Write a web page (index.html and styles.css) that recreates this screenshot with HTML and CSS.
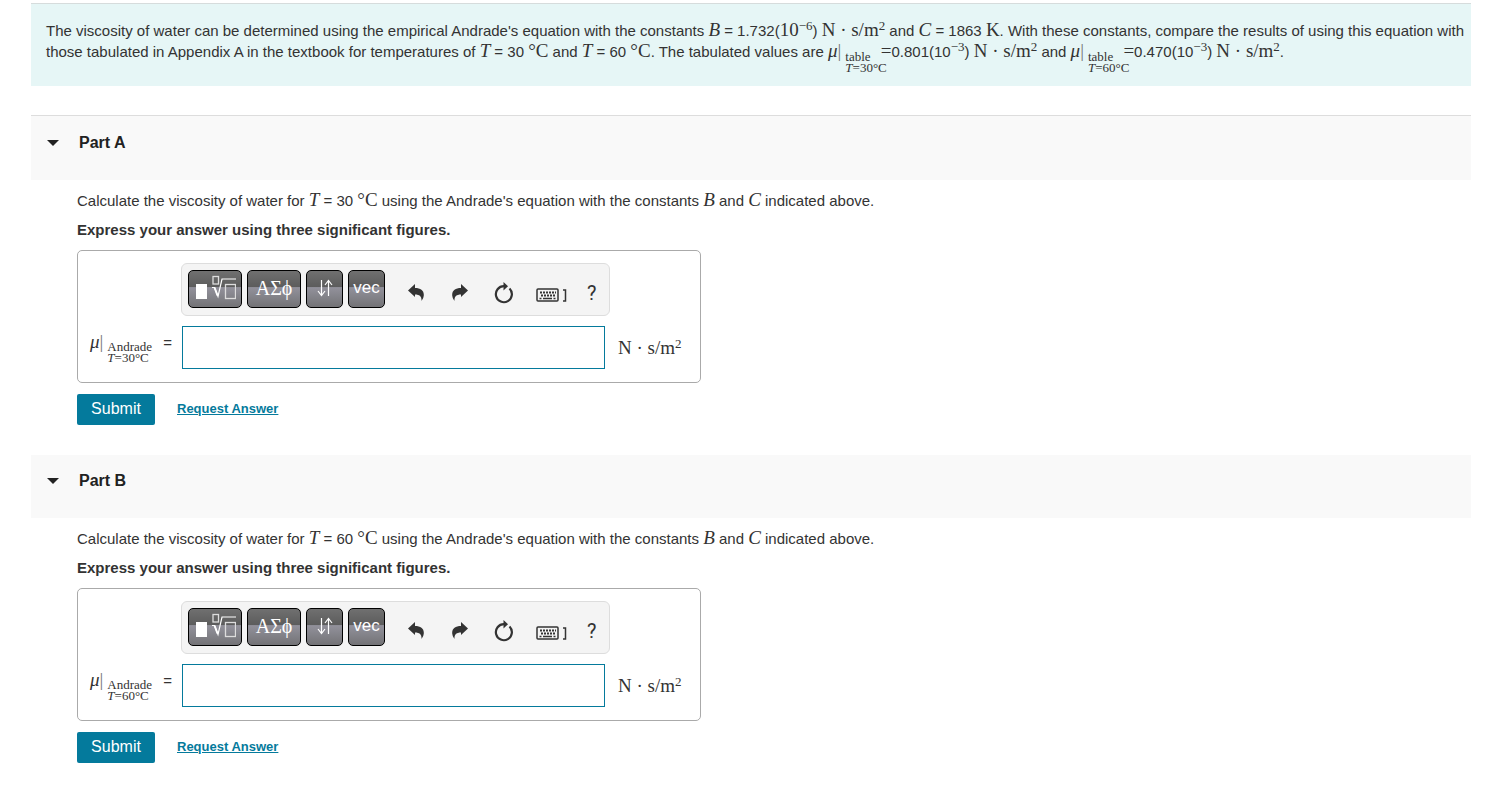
FILE: index.html
```html
<!DOCTYPE html>
<html lang="en">
<head>
    <meta charset="UTF-8">
    <meta name="viewport" content="width=device-width, initial-scale=1.0">
    <title>Viscosity of Water</title>
    <link rel="stylesheet" href="styles.css">
</head>
<body>
    <!-- shared toolbar icons -->
    <svg class="sprite" aria-hidden="true">
        <symbol id="icon-template" viewBox="0 0 42 26">
            <rect x="2" y="9" width="11" height="15" fill="#fff"/>
            <rect x="19" y="1.500" width="5.500" height="7.500" fill="none" stroke="#ddd" stroke-width="1.300"/>
            <path d="M18 12.500h2.500l3.500 9 4-17.500h14" fill="none" stroke="#fff" stroke-width="1.200"/>
            <path d="M20.500 12.500l3 8" fill="none" stroke="#fff" stroke-width="2"/>
            <rect x="31.500" y="9.500" width="10" height="14" fill="none" stroke="#ddd" stroke-width="1.300"/>
        </symbol>
        <symbol id="icon-arrows" viewBox="0 0 16 20">
            <path d="M4.500 2v15M1 13l3.500 4.500L8 13M11.500 18V3M8 7l3.500-4.500L15 7" fill="none" stroke="#fff" stroke-width="1.200"/>
        </symbol>
        <symbol id="icon-undo" viewBox="0 0 16 18">
            <path d="M0 6.500L7 0v4c6 0 9.500 3 8.700 8-.3 2-1.200 3.500-2.200 5 .3-4-1.500-6.500-6.500-6.500V13z" fill="#333"/>
        </symbol>
        <symbol id="icon-redo" viewBox="0 0 16 18">
            <path d="M16 6.500L9 0v4C3 4-.5 7 .3 12c.3 2 1.200 3.500 2.200 5C2.200 13 4 10.500 9 10.500V13z" fill="#333"/>
        </symbol>
        <symbol id="icon-reset" viewBox="0 0 20 22">
            <path d="M15.500 6.500A8 8 0 1 1 10 4.200" fill="none" stroke="#333" stroke-width="2.200"/>
            <path d="M9.500 0l4.500 4.200-4.500 4.200z" fill="#333"/>
        </symbol>
        <symbol id="icon-keyboard" viewBox="-8 -5 40 22">
            <rect x="1" y="2" width="21" height="12" rx="1" fill="none" stroke="#333" stroke-width="1.500"/>
            <path d="M4 5.500h16M5 8.500h14" stroke="#333" stroke-width="2" stroke-dasharray="2 1"/>
            <path d="M3.500 11.500h2M7 11.500h9M17.500 11.500h2" stroke="#333" stroke-width="1.500"/>
            <path d="M27 3h2.500v11H27" fill="none" stroke="#333" stroke-width="1.500"/>
        </symbol>
    </svg>

    <div class="problem">
        <p class="intro">The viscosity of water can be determined using the empirical Andrade's equation with the constants <span class="math var">B</span> = 1.732(<span class="math">10<sup>−6</sup></span>) <span class="math unit">N · s/m<sup>2</sup></span> and <span class="math var">C</span> = 1863 <span class="math">K</span>. With these constants, compare the results of using this equation with those tabulated in Appendix A in the textbook for temperatures of <span class="math var">T</span> = 30 <span class="math">°C</span> and <span class="math var">T</span> = 60 <span class="math">°C</span>. The tabulated values are <span class="math"><i>μ</i><span class="bar">|</span></span><span class="stack"><span>table</span><span><i>T</i>=30°C</span></span><span class="eq">=</span>0.801(10<sup>−3</sup>) <span class="math unit">N · s/m<sup>2</sup></span> and <span class="math"><i>μ</i><span class="bar">|</span></span><span class="stack"><span>table</span><span><i>T</i>=60°C</span></span><span class="eq">=</span>0.470(10<sup>−3</sup>) <span class="math unit">N · s/m<sup>2</sup></span>.</p>

        <section class="part">
            <h2 class="part-title"><button type="button" class="part-toggle"><span class="caret"></span>Part A</button></h2>
            <form class="part-body">
                <p class="question">Calculate the viscosity of water for <span class="math var">T</span> = 30 <span class="math">°C</span> using the Andrade's equation with the constants <span class="math var">B</span> and <span class="math var">C</span> indicated above.</p>
                <p class="hint">Express your answer using three significant figures.</p>
                <div class="answer">
                    <div class="toolbar">
                        <button type="button" class="key wide" aria-label="Templates"><svg width="42" height="26"><use href="#icon-template"/></svg></button>
                        <button type="button" class="key wide greek">ΑΣϕ</button>
                        <button type="button" class="key" aria-label="Arrows"><svg width="16" height="20"><use href="#icon-arrows"/></svg></button>
                        <button type="button" class="key">vec</button>
                        <div class="tools">
                            <button type="button" class="tool" aria-label="Undo"><svg width="16" height="18"><use href="#icon-undo"/></svg></button>
                            <button type="button" class="tool" aria-label="Redo"><svg width="16" height="18"><use href="#icon-redo"/></svg></button>
                            <button type="button" class="tool" aria-label="Reset"><svg width="20" height="22"><use href="#icon-reset"/></svg></button>
                            <button type="button" class="tool" aria-label="Keyboard shortcuts"><svg width="40" height="22"><use href="#icon-keyboard"/></svg></button>
                            <button type="button" class="tool help">?</button>
                        </div>
                    </div>
                    <label class="answer-label" for="answer-a"><span class="math"><i>μ</i><span class="bar">|</span></span><span class="stack"><span>Andrade</span><span><i>T</i>=30°C</span></span><span class="equals">=</span></label>
                    <input type="text" id="answer-a" class="answer-input">
                    <span class="math unit answer-unit">N · s/m<sup>2</sup></span>
                </div>
                <div class="actions">
                    <button type="submit" class="submit">Submit</button>
                    <a href="#" class="request">Request Answer</a>
                </div>
            </form>
        </section>

        <section class="part">
            <h2 class="part-title"><button type="button" class="part-toggle"><span class="caret"></span>Part B</button></h2>
            <form class="part-body">
                <p class="question">Calculate the viscosity of water for <span class="math var">T</span> = 60 <span class="math">°C</span> using the Andrade's equation with the constants <span class="math var">B</span> and <span class="math var">C</span> indicated above.</p>
                <p class="hint">Express your answer using three significant figures.</p>
                <div class="answer">
                    <div class="toolbar">
                        <button type="button" class="key wide" aria-label="Templates"><svg width="42" height="26"><use href="#icon-template"/></svg></button>
                        <button type="button" class="key wide greek">ΑΣϕ</button>
                        <button type="button" class="key" aria-label="Arrows"><svg width="16" height="20"><use href="#icon-arrows"/></svg></button>
                        <button type="button" class="key">vec</button>
                        <div class="tools">
                            <button type="button" class="tool" aria-label="Undo"><svg width="16" height="18"><use href="#icon-undo"/></svg></button>
                            <button type="button" class="tool" aria-label="Redo"><svg width="16" height="18"><use href="#icon-redo"/></svg></button>
                            <button type="button" class="tool" aria-label="Reset"><svg width="20" height="22"><use href="#icon-reset"/></svg></button>
                            <button type="button" class="tool" aria-label="Keyboard shortcuts"><svg width="40" height="22"><use href="#icon-keyboard"/></svg></button>
                            <button type="button" class="tool help">?</button>
                        </div>
                    </div>
                    <label class="answer-label" for="answer-b"><span class="math"><i>μ</i><span class="bar">|</span></span><span class="stack"><span>Andrade</span><span><i>T</i>=60°C</span></span><span class="equals">=</span></label>
                    <input type="text" id="answer-b" class="answer-input">
                    <span class="math unit answer-unit">N · s/m<sup>2</sup></span>
                </div>
                <div class="actions">
                    <button type="submit" class="submit">Submit</button>
                    <a href="#" class="request">Request Answer</a>
                </div>
            </form>
        </section>
    </div>
</body>
</html>
```

FILE: styles.css
```css
* {
    box-sizing: border-box;
}
body {
    margin: 0;
    font-family: "Liberation Sans", Arial, sans-serif;
    font-size: 15px;
    line-height: 21px;
    color: #333;
    background: white;
}
p, h2 {
    margin: 0;
}
button {
    font-family: inherit;
    cursor: pointer;
}
.sprite {
    display: none;
}
.problem {
    padding: 3px 14px 40px 31px;
}
.intro {
    padding: 16px 4px 13px 15px;
    margin-bottom: 29px;
    background: #e6f6f6;
    border-top: 1px solid #d6dcdc;
}

/* math */
.math {
    font-family: "Liberation Serif", "Times New Roman", serif;
    font-size: 19px;
    line-height: 1px;
}
.unit {
    white-space: nowrap;
}
.var {
    font-style: italic;
}
sup {
    font-family: "Liberation Serif", "Times New Roman", serif;
    font-size: 13px;
    line-height: 1px;
    vertical-align: 6px;
}
.bar {
    color: #777;
}
.stack {
    display: inline-flex;
    flex-direction: column;
    margin-left: 4px;
    vertical-align: -4px;
    font-family: "Liberation Serif", "Times New Roman", serif;
    font-size: 13px;
    line-height: 11px;
}
.eq {
    margin-left: -6px;
    font-family: "Liberation Serif", "Times New Roman", serif;
    font-size: 19px;
    line-height: 1px;
}

/* parts */
.part {
    margin-bottom: 30px;
}
.part-title {
    height: 63px;
    padding: 15px 16px;
    background: #f9f9f9;
}
.part:nth-of-type(1) .part-title {
    height: 65px;
    padding-top: 16px;
    border-top: 1px solid #ddd;
}
.part-toggle {
    display: flex;
    align-items: center;
    gap: 20px;
    padding: 0;
    background: none;
    border: none;
    font-size: 16px;
    font-weight: bold;
    line-height: 21px;
    color: #222;
}
.caret {
    border: 6px solid transparent;
    border-top-color: #222;
    border-bottom: none;
}
.part-body {
    padding: 10px 46px 0;
}
.hint {
    margin: 8px 0 10px;
    font-weight: bold;
}

/* answer box */
.answer {
    display: grid;
    grid-template-columns: 91px 423px 1fr;
    column-gap: 13px;
    row-gap: 10px;
    align-items: center;
    width: 624px;
    max-width: 100%;
    padding: 12px 12px 13px 0;
    border: 1px solid #aaa;
    border-radius: 5px;
}
.answer .stack {
    vertical-align: -3px;
}
.toolbar {
    grid-column: 2 / -1;
    display: flex;
    gap: 5px;
    width: 429px;
    height: 53px;
    margin-left: -1px;
    padding: 6px;
    background: #f4f4f4;
    border: 1px solid #ddd;
    border-radius: 6px;
}
.key {
    display: flex;
    flex-shrink: 0;
    align-items: center;
    justify-content: center;
    width: 37px;
    height: 38px;
    padding: 0 0 2px;
    border: 1px solid #000;
    border-radius: 5px;
    background: linear-gradient(#707070, #5c5c5c 44%, #92919b 46%, #737376);
    color: white;
    font-size: 17px;
}
.wide {
    width: 54px;
}
.greek {
    font-family: "Liberation Serif", "Times New Roman", serif;
    font-size: 20px;
}
.tools {
    display: flex;
    align-items: center;
    padding: 7px 0 0 4px;
}
.tool {
    display: flex;
    justify-content: center;
    width: 44px;
    padding: 0;
    background: none;
    border: none;
    color: #333;
}
.help {
    width: auto;
    margin-left: 17px;
    font-family: Roboto, sans-serif;
    font-size: 20px;
}
.answer-label {
    padding-left: 12px;
    white-space: nowrap;
}
.equals {
    margin-left: 11px;
}
.answer-input {
    width: 100%;
    height: 43px;
    padding: 0 8px;
    border: 1px solid #047a9c;
    font-size: 16px;
}
.answer-unit {
    line-height: 21px;
}
.actions {
    display: flex;
    align-items: center;
    gap: 22px;
    margin-top: 11px;
}
.submit {
    width: 78px;
    height: 31px;
    padding: 0 0 2px;
    background: #047a9c;
    border: none;
    border-radius: 2px;
    color: white;
    font-size: 16px;
}
.request {
    padding-bottom: 2px;
    font-size: 13px;
    font-weight: bold;
    color: #047a9c;
}
```
